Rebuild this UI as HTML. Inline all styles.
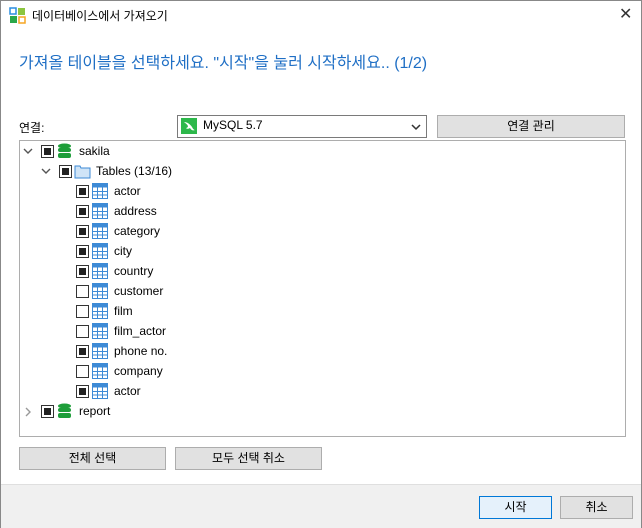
<!DOCTYPE html><html><head><meta charset="utf-8"><style>
body{margin:0;width:642px;height:528px;overflow:hidden;font-family:"Segoe UI","Liberation Sans","Noto Sans CJK KR",sans-serif;font-size:12px;color:#000;}
.win{position:absolute;left:0;top:0;width:640px;height:526px;border:1px solid #888;background:#fff;}
.a{position:absolute;}
.btn{position:absolute;background:#e1e1e1;border:1px solid #adadad;box-sizing:border-box;text-align:center;line-height:21px;font-size:12px;}
.cb{position:absolute;width:13px;height:13px;border:1px solid #333;background:#fff;box-sizing:border-box;}
.cb.on::after{content:"";position:absolute;left:2px;top:2px;width:7px;height:7px;background:#222;}
.t{position:absolute;line-height:16px;}
</style></head><body><div class="win">
<svg class="a" style="left:8px;top:6px" width="18" height="18" viewBox="0 0 18 18"><rect x="1" y="1" width="6" height="6" fill="none" stroke="#2a8de0" stroke-width="1.5"/><rect x="9" y="1" width="7" height="7" fill="#8bc53f"/><rect x="1" y="9" width="7" height="7" fill="#2aa84a"/><rect x="10" y="10" width="6" height="6" fill="none" stroke="#f5a623" stroke-width="1.5"/></svg>
<div class="a" style="left:31px;top:6px;font-size:12px">데이터베이스에서 가져오기</div>
<div class="a" style="left:618px;top:3px;font-size:16px;color:#333">✕</div>
<div class="a" style="left:18px;top:48px;font-size:16px;color:#1f6fc5">가져올 테이블을 선택하세요. "시작"을 눌러 시작하세요.. (1/2)</div>
<div class="a" style="left:18px;top:118px">연결:</div>
<div class="a" style="left:176px;top:114px;width:250px;height:23px;border:1px solid #7a7a7a;box-sizing:border-box;background:#fff"></div>
<div class="a" style="left:180px;top:117px;width:16px;height:16px;background:#2db84b"><svg width="16" height="16"><path d="M3 4c3 0 6 2 8 5 1 2 2 3 3 3-2 1-4 0-5-2-2 1-3 1-4 0 1 0 2-1 2-2C6 6 4 5 3 4z" fill="#fff"/></svg></div>
<div class="a" style="left:202px;top:117px;font-size:12px">MySQL 5.7</div>
<svg class="a" style="left:410px;top:122px" width="10" height="8"><path d="M1 2l4 4 4-4" fill="none" stroke="#333" stroke-width="1.5"/></svg>
<div class="btn" style="left:436px;top:114px;width:188px;height:23px">연결 관리</div>
<div class="a" style="left:18px;top:139px;width:607px;height:297px;border:1px solid #adadad;box-sizing:border-box;background:#fff"></div>
<svg class="a" style="left:22px;top:146px" width="10" height="8"><path d="M1 2l4 4 4-4" fill="none" stroke="#555" stroke-width="1.4"/></svg>
<div class="cb on" style="left:40px;top:144px"></div>
<svg class="a" style="left:56px;top:142px" width="15" height="16"><ellipse cx="7.5" cy="3" rx="6.5" ry="2.5" fill="#1e9e3a"/><rect x="1" y="5" width="13" height="4" rx="2" fill="#1e9e3a"/><rect x="1" y="10" width="13" height="5" rx="2" fill="#1e9e3a"/></svg>
<div class="t" style="left:78px;top:142px">sakila</div>
<svg class="a" style="left:40px;top:166px" width="10" height="8"><path d="M1 2l4 4 4-4" fill="none" stroke="#555" stroke-width="1.4"/></svg>
<div class="cb on" style="left:58px;top:164px"></div>
<svg class="a" style="left:73px;top:163px" width="17" height="15"><path d="M1 2h5l1 2h9v10H1z" fill="#cfe4f7" stroke="#3d8ad6"/></svg>
<div class="t" style="left:95px;top:162px">Tables (13/16)</div>
<div id="rows"></div>
<svg class="a" style="left:23px;top:406px" width="8" height="10"><path d="M2 1l4 4-4 4" fill="none" stroke="#999" stroke-width="1.4"/></svg>
<div class="cb on" style="left:40px;top:404px"></div>
<svg class="a" style="left:56px;top:402px" width="15" height="16"><ellipse cx="7.5" cy="3" rx="6.5" ry="2.5" fill="#1e9e3a"/><rect x="1" y="5" width="13" height="4" rx="2" fill="#1e9e3a"/><rect x="1" y="10" width="13" height="5" rx="2" fill="#1e9e3a"/></svg>
<div class="t" style="left:78px;top:402px">report</div>
<div class="btn" style="left:18px;top:446px;width:147px;height:23px">전체 선택</div>
<div class="btn" style="left:174px;top:446px;width:147px;height:23px">모두 선택 취소</div>
<div class="a" style="left:0;top:483px;width:640px;height:43px;background:#f0f0f0;border-top:1px solid #dfdfdf"></div>
<div class="btn" style="left:478px;top:495px;width:73px;height:23px;border:1px solid #0078d7;background:#e5f1fb">시작</div>
<div class="btn" style="left:559px;top:495px;width:73px;height:23px">취소</div>
<script>
var n=[["actor",1],["address",1],["category",1],["city",1],["country",1],["customer",0],["film",0],["film_actor",0],["phone no.",1],["company",0],["actor",1]],h="";
n.forEach(function(r,i){var y=182+i*20;h+='<div class="cb'+(r[1]?' on':'')+'" style="left:75px;top:'+(y+2)+'px"></div><svg class="a" style="left:91px;top:'+y+'px" width="16" height="16"><rect x="0.5" y="0.5" width="15" height="15" fill="#fff" stroke="#3d8ad6"/><rect x="0.5" y="0.5" width="15" height="4" fill="#3d8ad6"/><path d="M0 8.5h16M0 12h16M5.5 4v12M10.5 4v12" stroke="#3d8ad6"/></svg><div class="t" style="left:113px;top:'+y+'px">'+r[0]+'</div>';});
document.getElementById("rows").innerHTML=h;
</script>
</div></body></html>
